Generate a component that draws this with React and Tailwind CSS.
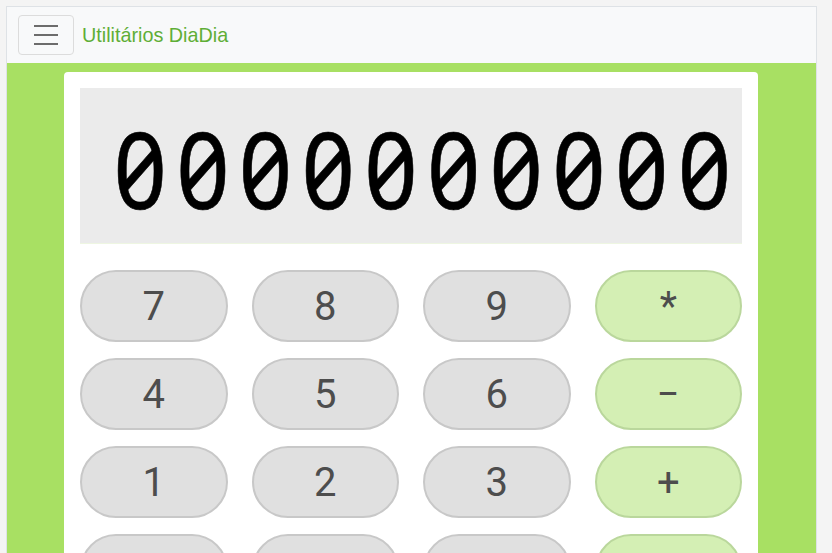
import { useState } from 'react';

const keys = [
  { label: '7' }, { label: '8' }, { label: '9' }, { label: '*', op: true },
  { label: '4' }, { label: '5' }, { label: '6' }, { label: '−', op: true },
  { label: '1' }, { label: '2' }, { label: '3' }, { label: '+', op: true },
  { label: '0' }, { label: '.' }, { label: 'C' }, { label: '=', op: true },
];

const App = () => {
  const [display, setDisplay] = useState('0000000000');

  const handleKey = (label) => {
    if (label === 'C') {
      setDisplay('0000000000');
    }
  };

  return (
    <div className="min-h-screen bg-[#f4f4f4] pl-[6px] pt-[6px] pr-[15px] font-['Liberation_Sans',Arial,sans-serif]">
      <div className="border border-[#dee2e6] min-h-[547px] flex flex-col">
        <nav className="h-[56px] bg-[#f8f9fa] flex items-center px-[11px] gap-[8px]">
          <button className="w-[56px] h-[40px] border border-[#dcdcdc] rounded-[4px] flex flex-col items-center justify-center gap-[7px]">
            <span className="block w-[24px] h-[2px] bg-[#6c6c6c]"></span>
            <span className="block w-[24px] h-[2px] bg-[#6c6c6c]"></span>
            <span className="block w-[24px] h-[2px] bg-[#6c6c6c]"></span>
          </button>
          <span className="text-[19.8px] text-[#5fae36] pt-[1px]">Utilitários DiaDia</span>
        </nav>

        <div className="flex-1 bg-[#a8e063] pt-[9px] pl-[57px] pr-[58px]">
          <div className="bg-white rounded-[4px] p-[16px] h-full">
            <div className="h-[156px] bg-[#ebebeb] border-b border-[#eef6e2] flex items-center justify-end pr-[2px] overflow-hidden">
              <span className="font-['Noto_Sans',sans-serif] [font-feature-settings:'zero','tnum'] text-[106px] font-normal leading-none text-black tracking-[10.6px] pt-[4px] scale-x-[0.88] origin-right [-webkit-text-stroke:0.6px_black]">
                {display}
              </span>
            </div>

            <div className="grid grid-cols-4 gap-x-[24px] gap-y-[16px] mt-[26px]">
              {keys.map((k) => (
                <button
                  key={k.label}
                  onClick={() => handleKey(k.label)}
                  className={`h-[72px] rounded-full border-2 text-[40px] text-[#4d4d4d] font-['Roboto',sans-serif] flex items-center justify-center pt-[2px] ${
                    k.op ? 'bg-[#d4efb4] border-[#bad79c]' : 'bg-[#e0e0e0] border-[#c8c8c8]'
                  }`}
                >
                  {k.label}
                </button>
              ))}
            </div>
          </div>
        </div>
      </div>
    </div>
  );
};

export default App;
